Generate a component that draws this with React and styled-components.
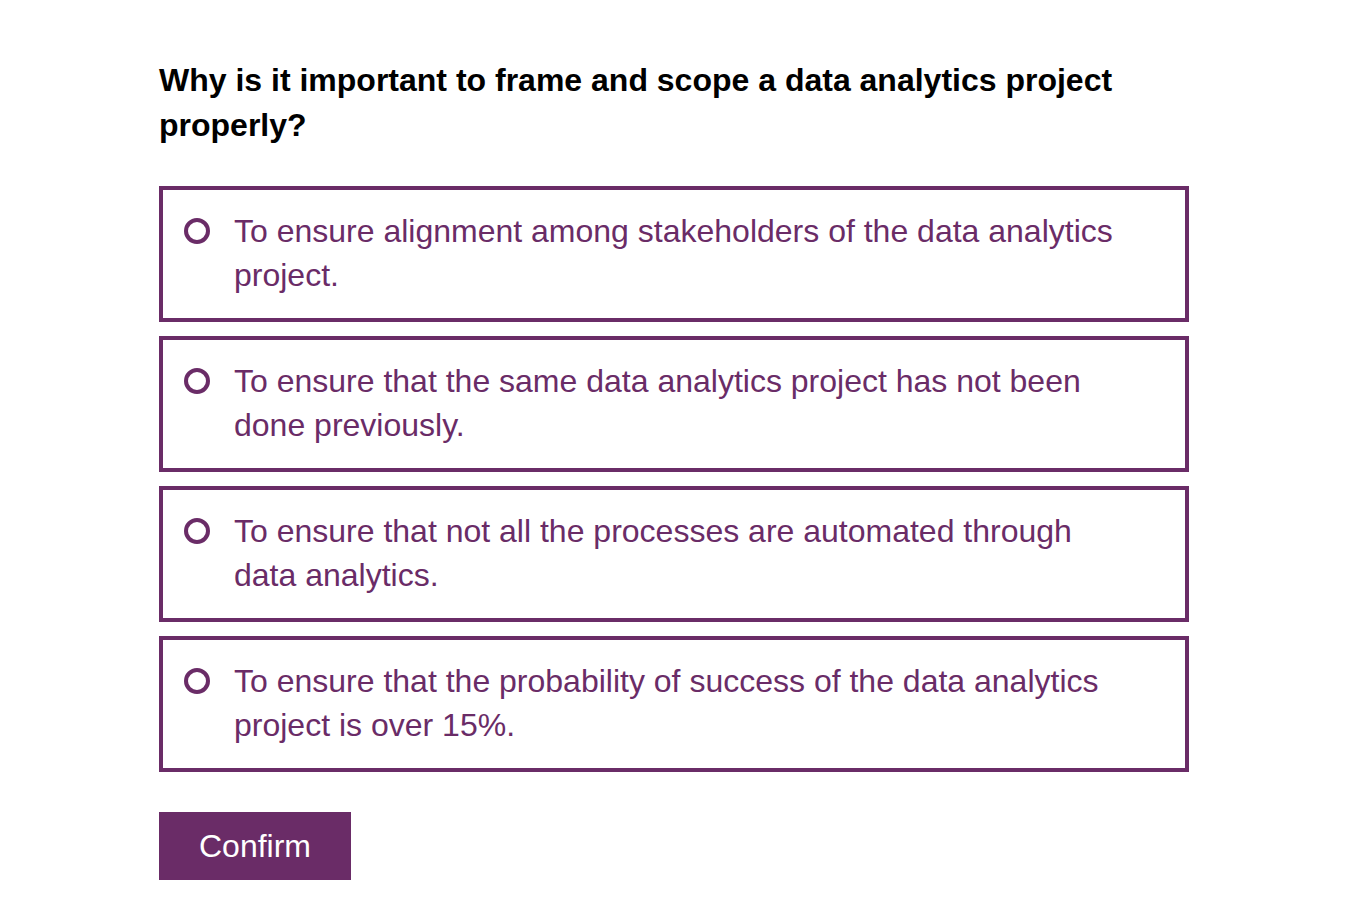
import React, { useState } from "react";
import styled, { createGlobalStyle } from "styled-components";

const purple = "#6a2c67";

const GlobalStyle = createGlobalStyle`
  html, body {
    margin: 0;
    padding: 0;
    background: #ffffff;
    font-family: "Liberation Sans", Arial, sans-serif;
  }
`;

const options = [
  "To ensure alignment among stakeholders of the data analytics project.",
  "To ensure that the same data analytics project has not been done previously.",
  "To ensure that not all the processes are automated through data analytics.",
  "To ensure that the probability of success of the data analytics project is over 15%.",
];

export default function App() {
  const [selected, setSelected] = useState(null);

  return (
    <>
      <GlobalStyle />
      <Page>
        <Question>
          Why is it important to frame and scope a data analytics project
          properly?
        </Question>
        <OptionList>
          {options.map((text, i) => (
            <Option key={i} onClick={() => setSelected(i)}>
              <Radio $checked={selected === i} />
              <OptionText>{text}</OptionText>
            </Option>
          ))}
        </OptionList>
        <ConfirmButton>Confirm</ConfirmButton>
      </Page>
    </>
  );
}

const Page = styled.div`
  width: 1030px;
  padding: 58px 0 0 159px;
`;

const Question = styled.h2`
  margin: 0 0 38px;
  font-size: 32px;
  line-height: 45px;
  font-weight: 700;
  color: #000;
  max-width: 1000px;
`;

const OptionList = styled.div`
  display: flex;
  flex-direction: column;
  gap: 14px;
`;

const Option = styled.label`
  display: flex;
  align-items: flex-start;
  gap: 24px;
  box-sizing: border-box;
  min-height: 136px;
  padding: 19px 50px 21px 21px;
  border: 4px solid ${purple};
  cursor: pointer;
`;

const Radio = styled.span`
  flex: none;
  box-sizing: border-box;
  width: 26px;
  height: 26px;
  margin-top: 9px;
  border-radius: 50%;
  border: 4px solid ${purple};
  background: ${(p) => (p.$checked ? purple : "#fff")};
  box-shadow: inset 0 0 0 ${(p) => (p.$checked ? "4px #fff" : "0 transparent")};
  filter: blur(0.5px);
`;

const OptionText = styled.span`
  font-size: 32px;
  line-height: 44px;
  color: ${purple};
`;

const ConfirmButton = styled.button`
  display: block;
  margin-top: 40px;
  width: 192px;
  height: 68px;
  border: none;
  background: ${purple};
  color: #fff;
  font-family: "Liberation Sans", Arial, sans-serif;
  font-size: 32px;
  cursor: pointer;
`;
